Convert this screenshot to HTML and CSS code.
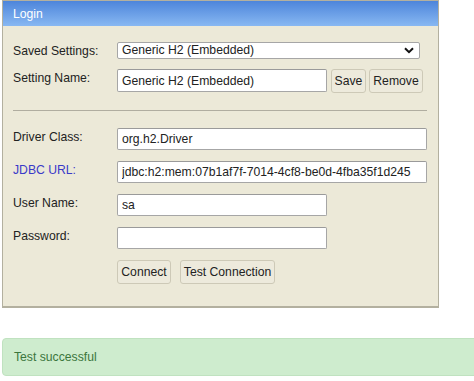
FILE: index.html
```html
<!DOCTYPE html>
<html>
<head>
<meta charset="utf-8">
<link rel="stylesheet" href="styles.css">
</head>
<body>
<div class="page">
  <div class="panel">
    <div class="panel-head">Login</div>
    <div class="panel-body">
      <div class="row row-select">
        <label class="lbl">Saved Settings:</label>
        <div class="select-wrap">
          <select class="select">
            <option>Generic H2 (Embedded)</option>
          </select>
          <svg class="chev" width="10" height="7" viewBox="0 0 10 7"><path d="M1 1.2 L5 5.2 L9 1.2" fill="none" stroke="#111" stroke-width="2"/></svg>
        </div>
      </div>
      <div class="row row-name">
        <label class="lbl">Setting Name:</label>
        <input class="field short" type="text" value="Generic H2 (Embedded)">
        <button class="btn btn-save">Save</button>
        <button class="btn btn-remove">Remove</button>
      </div>
      <div class="sep"></div>
      <div class="row first">
        <label class="lbl">Driver Class:</label>
        <input class="field long" type="text" value="org.h2.Driver">
      </div>
      <div class="row">
        <label class="lbl link">JDBC URL:</label>
        <input class="field long" type="text" value="jdbc:h2:mem:07b1af7f-7014-4cf8-be0d-4fba35f1d245">
      </div>
      <div class="row">
        <label class="lbl">User Name:</label>
        <input class="field short" type="text" value="sa">
      </div>
      <div class="row">
        <label class="lbl">Password:</label>
        <input class="field short" type="password" value="">
      </div>
      <div class="row row-buttons">
        <span class="lbl"></span>
        <button class="btn btn-connect">Connect</button>
        <button class="btn btn-test">Test Connection</button>
      </div>
    </div>
  </div>
  <div class="alert">Test successful</div>
</div>
</body>
</html>
```

FILE: styles.css
```css
html, body {
  margin: 0;
  padding: 0;
  background: #ffffff;
  overflow: hidden;
}
body {
  font-family: "Liberation Sans", Arial, sans-serif;
  font-size: 12.2px;
  color: #222;
}
.page {
  padding-left: 2px;
}
.panel {
  width: 435px;
  background: #ece9d8;
  border: 1px solid #b3b09f;
  border-bottom-width: 2px;
}
.panel-head {
  height: 25px;
  line-height: 26px;
  padding-left: 10px;
  color: #ffffff;
  background: linear-gradient(to bottom, #4d85db, #88b8f2);
}
.panel-body {
  padding: 16px 10px 22px 10px;
}
.row {
  display: flex;
  align-items: flex-start;
  margin-top: 11px;
}
.row-select {
  margin-top: 0;
}
.row-name {
  margin-top: 10px;
}
.row.first {
  margin-top: 17px;
}
.lbl {
  width: 104px;
  flex: none;
  padding-top: 2px;
  line-height: 15px;
  color: #222;
}
.lbl.link {
  color: #3a3ac8;
}
.select-wrap {
  position: relative;
  width: 303px;
  height: 17px;
}
.select {
  appearance: none;
  -webkit-appearance: none;
  width: 303px;
  height: 17px;
  margin: 0;
  padding: 0 0 0 4px;
  border: 1px solid #a6a6a6;
  border-radius: 2px;
  background: #ffffff;
  font-family: inherit;
  font-size: inherit;
  color: #222;
  line-height: 15px;
}
.chev {
  position: absolute;
  right: 6px;
  top: 5px;
}
.field {
  box-sizing: border-box;
  height: 22px;
  margin: 0;
  padding: 0 4px;
  border: 1px solid #a6a6a6;
  border-top-color: #9a9a9a;
  border-radius: 2px;
  background: #ffffff;
  font-family: inherit;
  font-size: inherit;
  color: #222;
}
.row-name .field {
  height: 23px;
}
.field.short {
  width: 210px;
}
.field.long {
  width: 310px;
}
.btn {
  box-sizing: border-box;
  height: 24px;
  margin: 0;
  padding: 0;
  white-space: nowrap;
  background: #edeadc;
  border: 1px solid #cdc9b7;
  border-radius: 3px;
  font-family: inherit;
  font-size: inherit;
  color: #222;
}
.btn-save {
  width: 35px;
  margin-left: 4px;
}
.btn-remove {
  width: 54px;
  margin-left: 3px;
}
.btn-connect {
  width: 54px;
}
.btn-test {
  width: 95px;
  margin-left: 9px;
}
.sep {
  margin-top: 17px;
  height: 1px;
  background: #b0ada0;
  width: 414px;
}
.alert {
  margin-top: 30px;
  margin-right: -10px;
  height: 38px;
  line-height: 37px;
  padding-left: 11px;
  box-sizing: border-box;
  background: #ceecce;
  border: 1px solid #c0e2c0;
  border-radius: 4px;
  color: #3c763d;
}
```
